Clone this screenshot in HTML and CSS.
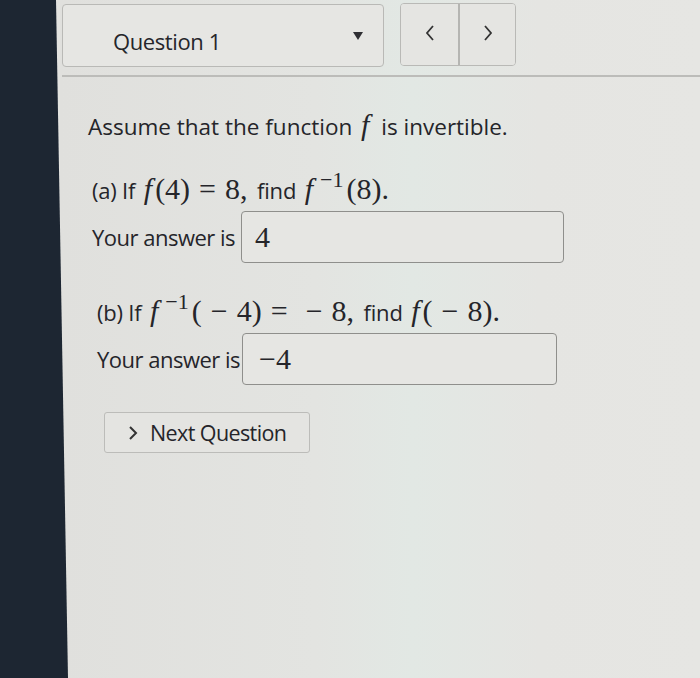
FILE: index.html
```html
<!DOCTYPE html>
<html>
<head>
<meta charset="utf-8">
<link rel="stylesheet" href="styles.css">
</head>
<body>
<div class="frame">
  <div class="bezel"></div>
  <div class="screen">
    <div class="topbar">
      <div class="select">
        <span class="select-label">Question 1</span>
        <span class="caret"></span>
      </div>
      <div class="nav">
        <button class="nav-btn">
          <svg width="14" height="20" viewBox="0 0 14 20"><path d="M10 3 L4 10 L10 17" fill="none" stroke="#333" stroke-width="1.8"/></svg>
        </button>
        <button class="nav-btn">
          <svg width="14" height="20" viewBox="0 0 14 20"><path d="M4 3 L10 10 L4 17" fill="none" stroke="#333" stroke-width="1.8"/></svg>
        </button>
      </div>
    </div>
    <div class="rule"></div>
    <div class="content">
      <p class="intro">Assume that the function <span class="math"><span class="mi">f</span></span> is invertible.</p>

      <div class="part part-a">
        <p class="prompt">(a) If <span class="math"><span class="mi">f</span>(4)<span class="mo">=</span>8,</span> find <span class="math"><span class="mi">f</span><sup>−1</sup>(8).</span></p>
        <div class="answer">
          <span class="answer-label">Your answer is</span>
          <div class="answer-box"><span class="math">4</span></div>
        </div>
      </div>

      <div class="part part-b">
        <p class="prompt">(b) If <span class="math"><span class="mi">f</span><sup>−1</sup>(<span class="mo">−</span>4)<span class="mo">=</span><span class="mo">−</span>8,</span> find <span class="math"><span class="mi">f</span>(<span class="mo">−</span>8).</span></p>
        <div class="answer">
          <span class="answer-label">Your answer is</span>
          <div class="answer-box short"><span class="math">−4</span></div>
        </div>
      </div>

      <button class="next">
        <svg width="12" height="16" viewBox="0 0 12 16"><path d="M3 2 L9 8 L3 14" fill="none" stroke="#333" stroke-width="2"/></svg>
        <span>Next Question</span>
      </button>
    </div>
  </div>
</div>
</body>
</html>
```

FILE: styles.css
```css
html, body {
  margin: 0;
  padding: 0;
  width: 700px;
  height: 678px;
  overflow: hidden;
}
body {
  background: #e3e3e0;
  font-family: "Open Sans", Lato, sans-serif;
  font-variant-ligatures: none;
  color: #25252a;
}
.frame {
  display: flex;
  height: 678px;
}
.bezel {
  width: 68px;
  flex: none;
  background: #1d2632;
  clip-path: polygon(0 0, 56px 0, 68px 100%, 0 100%);
  margin-right: -8px;
}
.screen {
  flex: 1;
  background: linear-gradient(90deg, #e0e0dd 0%, #e3e4e1 40%, #e2e8e4 55%, #e5e5e2 75%, #e6e6e3 100%);
  display: flex;
  flex-direction: column;
}
.topbar {
  display: flex;
  align-items: flex-start;
  gap: 16px;
  padding: 4px 0 0 2px;
}
.select {
  width: 322px;
  height: 63px;
  box-sizing: border-box;
  border: 1.5px solid #b9b9b6;
  border-radius: 4px;
  background: #e6e6e3;
  display: flex;
  align-items: center;
  padding: 0 20px 0 50px;
}
.select-label {
  flex: 1;
  font-size: 22px;
  letter-spacing: -0.4px;
  padding-top: 10px;
}
.caret {
  width: 0;
  height: 0;
  border-left: 5px solid transparent;
  border-right: 5px solid transparent;
  border-top: 8px solid #2f2f33;
}
.nav {
  display: flex;
  height: 63px;
  box-sizing: border-box;
  border: 1.5px solid #b9b9b6;
  border-radius: 4px;
  overflow: hidden;
  margin-top: -1px;
}
.nav-btn {
  width: 57px;
  background: #e5e5e2;
  border: none;
  padding: 0 0 4px 0;
  display: flex;
  align-items: center;
  justify-content: center;
}
.nav-btn + .nav-btn {
  border-left: 2px solid #b5b5b2;
}
.rule {
  height: 2px;
  background: #bcbcb9;
  margin: 8px 0 0 2px;
}
.content {
  padding: 31px 0 0 28px;
}
p {
  margin: 0;
}
.intro {
  font-size: 22.5px;
  line-height: 34px;
}
.intro .math {
  margin: 0 3px 0 1px;
}
.math {
  font-family: "Liberation Serif", "DejaVu Serif", serif;
  font-size: 30px;
  letter-spacing: 0;
  margin: 0 4px 0 1px;
}
.answer-box .math {
  margin: 0;
}
.mi {
  font-style: italic;
  margin: 0 3px 0 2px;
}
.mo {
  display: inline-block;
  margin: 0 9px;
}
sup {
  font-size: 22px;
  vertical-align: 12px;
  line-height: 0;
  margin-left: 4px;
  margin-right: 3px;
}
.prompt {
  font-size: 22px;
  letter-spacing: -0.2px;
  line-height: 34px;
}
.part-a {
  margin-top: 28px;
  padding-left: 4px;
}
.part-b {
  margin-top: 31px;
  padding-left: 9px;
}
.answer {
  display: flex;
  align-items: center;
  margin-top: 4px;
}
.answer-label {
  font-size: 22px;
  letter-spacing: -0.5px;
  white-space: nowrap;
  flex: none;
  width: 149px;
}
.answer-box {
  width: 323px;
  height: 52px;
  box-sizing: border-box;
  border: 1.5px solid #8f8f8c;
  border-radius: 4px;
  display: flex;
  align-items: center;
  padding-left: 13px;
  background: #e6e6e3;
}
.answer-box.short {
  width: 315px;
  padding-left: 16px;
}
.part-b .answer-label {
  width: 145px;
}
.next {
  margin: 27px 0 0 16px;
  width: 206px;
  height: 41px;
  border: 1.5px solid #bcbcb9;
  border-radius: 3px;
  background: #e4e4e1;
  display: flex;
  align-items: center;
  gap: 11px;
  padding: 0 0 0 22px;
  font-family: "Open Sans", Lato, sans-serif;
  font-size: 21.5px;
  letter-spacing: -0.6px;
  color: #25252a;
}
```
